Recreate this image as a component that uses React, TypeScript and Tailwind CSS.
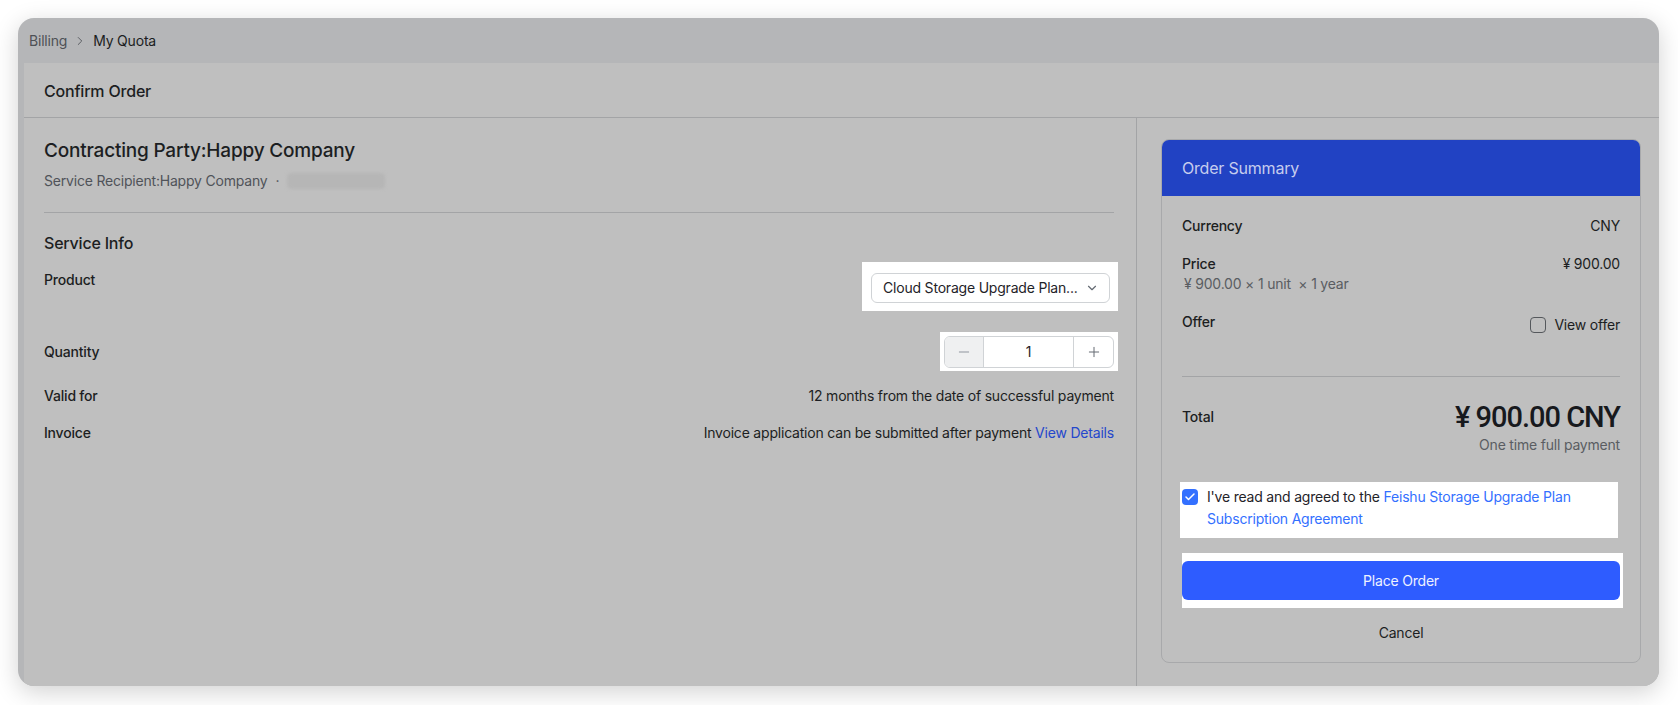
import { ChevronDown, ChevronRight, Minus, Plus, Check } from "lucide-react";

const font = { fontFamily: "Inter, 'Noto Sans', sans-serif" };

function InfoRow({ label, children }: { label: string; children: React.ReactNode }) {
    return (
        <div className="flex items-center justify-between h-5">
            <span className="text-sm font-medium text-[#1c1e22]">{label}</span>
            <div className="text-sm text-[#1c1e22]">{children}</div>
        </div>
    );
}

export default function App() {
    return (
        <div className="min-h-screen bg-white p-[18px] pr-[19px] tracking-[-0.2px]" style={font}>
            <div className="h-[668px] rounded-[16px] overflow-hidden bg-[#b5b6b8] shadow-[0_6px_24px_rgba(0,0,0,0.18)] flex flex-col">
                {/* breadcrumb */}
                <div className="h-[45px] shrink-0 flex items-center pl-[11px] gap-1.5 text-sm">
                    <span className="text-[#4e5156]">Billing</span>
                    <ChevronRight className="w-3.5 h-3.5 text-[#55585d]" strokeWidth={1.6} />
                    <span className="text-[#1c1e22]">My Quota</span>
                </div>

                <div className="flex-1 ml-[6px] bg-[#bfbfbf] flex flex-col">
                    <div className="h-[55px] shrink-0 flex items-center px-5 pt-[2px] border-b border-[#a3a4a6]">
                        <h2 className="text-base font-medium text-[#1c1e22]">Confirm Order</h2>
                    </div>

                    <div className="flex-1 flex">
                        {/* left column */}
                        <div className="flex-1 border-r border-[#a3a4a6] pl-5 pr-[22px] pt-[19px]">
                            <h1 className="text-[19px] leading-7 font-medium text-[#1c1e22]">
                                Contracting Party:Happy Company
                            </h1>
                            <div className="mt-1.5 flex items-center text-sm text-[#505359] leading-5">
                                <span>Service Recipient:Happy Company</span>
                                <span className="mx-2">·</span>
                                <span className="inline-block w-[98px] h-[16px] rounded-sm bg-[#b6b6b6] blur-[1.5px]" />
                            </div>
                            <div className="mt-[21px] border-t border-[#a3a4a6]" />

                            <h3 className="mt-[18px] text-base leading-6 font-medium text-[#1c1e22]">Service Info</h3>

                            <div className="mt-[7px] flex items-start justify-between">
                                <span className="mt-[8px] text-sm leading-5 font-medium text-[#1c1e22]">Product</span>
                                <div className="bg-white pl-[9px] pr-[8px] pt-[11px] pb-[8px] -mr-[4px]">
                                    <div className="w-[239px] h-[30px] rounded-md border border-[#d0d3d6] bg-white flex items-center justify-between pl-[11px] pr-[10px]">
                                        <span className="text-sm text-[#1f2329]">Cloud Storage Upgrade Plan...</span>
                                        <ChevronDown className="w-3.5 h-3.5 text-[#646a73]" strokeWidth={2} />
                                    </div>
                                </div>
                            </div>

                            <div className="mt-[21px] flex items-center justify-between">
                                <span className="text-sm leading-5 font-medium text-[#1c1e22]">Quantity</span>
                                <div className="bg-white p-[4px] pt-[4px] pb-[3px] -mr-[4px]">
                                    <div className="w-[170px] h-[32px] rounded-md border border-[#d0d3d6] flex overflow-hidden">
                                        <div className="w-[39px] bg-[#eff0f1] border-r border-[#d0d3d6] flex items-center justify-center">
                                            <Minus className="w-4 h-4 text-[#8f959e]" strokeWidth={1.5} />
                                        </div>
                                        <div className="flex-1 flex items-center justify-center text-sm text-[#1f2329]">1</div>
                                        <div className="w-[40px] border-l border-[#d0d3d6] flex items-center justify-center">
                                            <Plus className="w-4 h-4 text-[#646a73]" strokeWidth={1.5} />
                                        </div>
                                    </div>
                                </div>
                            </div>

                            <div className="mt-[15px]">
                                <InfoRow label="Valid for">12 months from the date of successful payment</InfoRow>
                            </div>
                            <div className="mt-[17px]">
                                <InfoRow label="Invoice">
                                    Invoice application can be submitted after payment{" "}
                                    <span className="text-[#2447cc]">View Details</span>
                                </InfoRow>
                            </div>
                        </div>

                        {/* right column */}
                        <div className="w-[522px] shrink-0 pl-6 pr-[18px] pt-[21px] pb-[26px]">
                            <div className="rounded-lg border border-[#a8a9ab] overflow-hidden">
                                <div className="h-[56px] bg-[#2142c3] flex items-center px-5">
                                    <span className="text-base text-[#c6cdee]">Order Summary</span>
                                </div>
                                <div className="px-5 pt-5 pb-[19px]">
                                    <InfoRow label="Currency">CNY</InfoRow>

                                    <div className="mt-[18px] flex justify-between">
                                        <div>
                                            <div className="text-sm leading-5 font-medium text-[#1c1e22]">Price</div>
                                            <div className="pl-[2px] text-sm leading-5 text-[#5a5d62]">¥ 900.00 × 1 unit &nbsp;× 1 year</div>
                                        </div>
                                        <span className="text-sm leading-5 text-[#1c1e22]">¥ 900.00</span>
                                    </div>

                                    <div className="mt-[18px] flex justify-between items-start">
                                        <span className="text-sm leading-5 font-medium text-[#1c1e22]">Offer</span>
                                        <label className="mt-[3px] flex items-center gap-2 text-sm leading-5 text-[#1c1e22]">
                                            <span className="w-4 h-4 rounded-[4px] border border-[#55585c]" />
                                            View offer
                                        </label>
                                    </div>

                                    <div className="mt-[41px] border-t border-[#a3a4a6]" />

                                    <div className="mt-[22px] flex justify-between items-center">
                                        <span className="text-sm font-medium text-[#1c1e22]">Total</span>
                                        <span
                                            className="text-[29px] leading-9 font-medium text-[#17191d] tracking-[-1px]"
                                            style={{ fontFamily: "Roboto, sans-serif" }}
                                        >
                                            ¥ 900.00 CNY
                                        </span>
                                    </div>
                                    <div className="text-right text-sm leading-5 text-[#5a5d62]">One time full payment</div>

                                    <div className="mt-[27px] -ml-[2px] mr-[2px] bg-white pl-[2px] pt-[4px] pb-[8px] flex gap-[9px]">
                                        <span className="mt-[3px] w-4 h-4 shrink-0 rounded-[4px] bg-[#3370ff] flex items-center justify-center">
                                            <Check className="w-3 h-3 text-white" strokeWidth={3} />
                                        </span>
                                        <p className="text-sm leading-[22px] text-[#1f2329]">
                                            I've read and agreed to the{" "}
                                            <span className="text-[#3370ff]">Feishu Storage Upgrade Plan</span>
                                            <br />
                                            <span className="text-[#3370ff]">Subscription Agreement</span>
                                        </p>
                                    </div>

                                    <div className="mt-[15px] -mr-[3px] bg-white pr-[3px] py-[8px]">
                                        <button className="w-full h-[39px] rounded-md bg-[#2e5cff] text-sm text-[#eef2ff]">
                                            Place Order
                                        </button>
                                    </div>

                                    <div className="mt-[15px] text-center text-sm leading-5 text-[#1c1e22]">Cancel</div>
                                </div>
                            </div>
                        </div>
                    </div>
                </div>
            </div>
        </div>
    );
}
